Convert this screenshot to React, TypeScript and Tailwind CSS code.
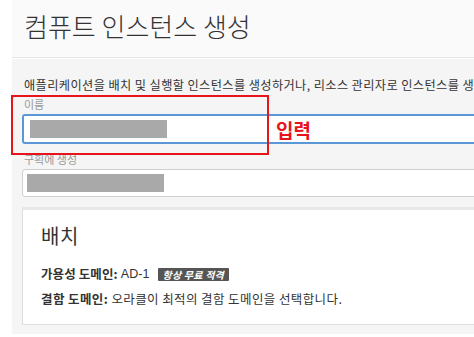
export default function App() {
  return (
    <div
      className="w-[474px] h-[337px] overflow-hidden bg-white pl-3"
      style={{ fontFamily: '"Noto Sans CJK KR", "Noto Sans", sans-serif' }}
    >
      <div className="w-[520px]">
        {/* Header */}
        <div className="h-[58px] bg-[#fafafa] border-b border-[#e6e6e6] pl-3 pt-[9px]">
          <h1 className="text-[26px] leading-[34px] font-light text-[#333] whitespace-nowrap">컴퓨트 인스턴스 생성</h1>
        </div>

        {/* Body */}
        <div className="h-[275px] mt-px bg-[#f5f5f5] pl-[10px] pt-[18px]">
          <p className="text-[12.2px] tracking-[0.4px] leading-4 text-[#333] whitespace-nowrap pl-[2px]">
            애플리케이션을 배치 및 실행할 인스턴스를 생성하거나, 리소스 관리자로 인스턴스를 생성합니다.
          </p>

          {/* Name field */}
          <div className="relative mt-[4px]">
            <div className="absolute left-[-11px] top-[-2px] w-[258px] h-[60px] border-2 border-[#e8141c] pointer-events-none" />
            <div className="text-[11px] leading-[15px] text-[#999] pl-[2px]">이름</div>
            <div className="mt-[2px] h-[30px] bg-white border-2 border-[#5b96d6] rounded-[3px] flex items-center pl-[6px]">
              <div className="w-[137px] h-[18px] bg-[#a9a9a9]" />
              <span className="ml-[109px] text-[19px] font-bold text-[#e8141c] leading-none">입력</span>
            </div>
          </div>

          {/* Compartment field */}
          <div className="mt-[8px]">
            <div className="text-[11px] leading-[15px] text-[#999] pl-[2px]">구획에 생성</div>
            <div className="mt-[2px] h-[28px] bg-white border border-[#cfcfcf] rounded-[3px] flex items-center pl-[4px]">
              <div className="w-[137px] h-[18px] bg-[#a9a9a9]" />
            </div>
          </div>

          {/* Placement card */}
          <div className="mt-[10px] h-[118px] bg-white border border-[#dedede] border-t-[3px] border-t-[#e8e8e8] pl-[18px] pt-[12px]">
            <h2 className="text-[20px] leading-[28px] text-[#333] tracking-[0.5px]">배치</h2>
            <div className="mt-[16px] flex items-center text-[12.5px] tracking-[0.1px] leading-4 text-[#333] whitespace-nowrap">
              <span className="font-bold">가용성 도메인:</span>
              <span className="ml-[3px]" style={{ fontFamily: '"Liberation Sans", "Noto Sans CJK KR", sans-serif' }}>AD-1</span>
              <span className="ml-[8px] bg-[#555] text-white text-[10px] tracking-[0.2px] font-bold italic leading-[13px] px-[5px] rounded-[1px]">항상 무료 적격</span>
            </div>
            <div className="mt-[9px] text-[12.5px] tracking-[0.4px] leading-4 text-[#333] whitespace-nowrap">
              <span className="font-bold">결함 도메인:</span> 오라클이 최적의 결함 도메인을 선택합니다.
            </div>
          </div>
        </div>
      </div>
    </div>
  );
}
